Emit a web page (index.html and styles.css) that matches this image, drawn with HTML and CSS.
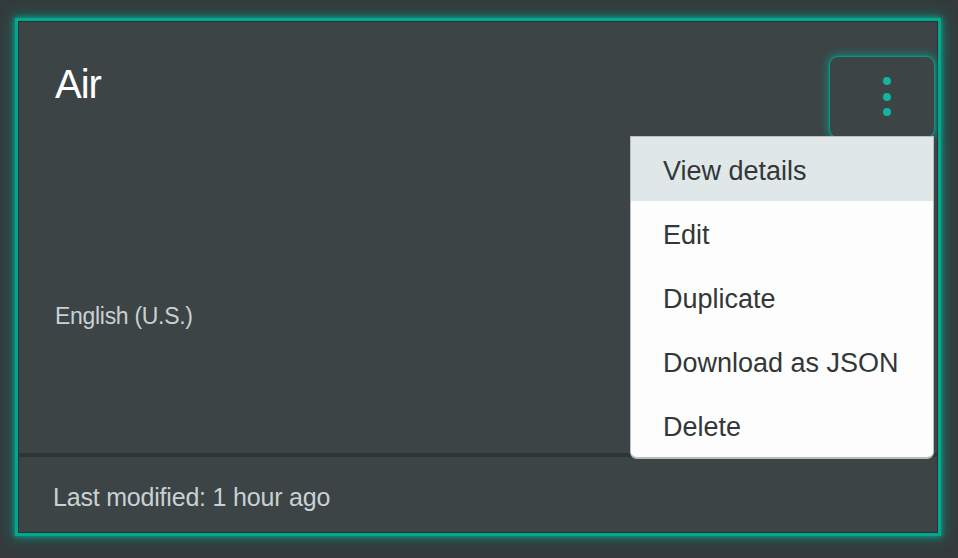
FILE: index.html
```html
<!DOCTYPE html>
<html lang="en">
<head>
    <meta charset="UTF-8">
    <meta name="viewport" content="width=device-width, initial-scale=1.0">
    <title>Air</title>
    <link rel="stylesheet" href="styles.css">
</head>
<body>
    <div class="card">
        <div class="card-main">
            <div class="card-header">
                <div class="card-title">Air</div>
                <div class="menu-wrap">
                    <button class="menu-button" aria-label="More actions">
                        <svg width="8" height="40" viewBox="0 0 8 40">
                            <circle cx="4" cy="4" r="4"/>
                            <circle cx="4" cy="20" r="4"/>
                            <circle cx="4" cy="35" r="4"/>
                        </svg>
                    </button>
                    <ul class="menu">
                        <li class="menu-item active">View details</li>
                        <li class="menu-item">Edit</li>
                        <li class="menu-item">Duplicate</li>
                        <li class="menu-item">Download as JSON</li>
                        <li class="menu-item">Delete</li>
                    </ul>
                </div>
            </div>
            <div class="card-language">English (U.S.)</div>
        </div>
        <div class="card-footer">Last modified: 1 hour ago</div>
    </div>
</body>
</html>
```

FILE: styles.css
```css
html {
    background: #343a3c;
}
body {
    font-family: "Liberation Sans", Arial, sans-serif;
    margin: 0;
    padding: 21px 20px 25px 18px;
    background: #343a3c;
}
.card {
    box-sizing: border-box;
    width: 920px;
    height: 512px;
    display: flex;
    flex-direction: column;
    background: #3c4446;
    border: 1px solid #2b3032;
    box-shadow: 0 0 0 3px #00a88e, 0 0 5px 4px rgba(0, 168, 142, 0.85), 0 0 14px 6px rgba(0, 168, 142, 0.4);
}
.card-main {
    flex: 1;
    padding: 35px 4px 0 36px;
}
.card-header {
    display: flex;
    justify-content: space-between;
    align-items: flex-start;
}
.card-title {
    margin-top: 4px;
    font-size: 40px;
    line-height: 46px;
    letter-spacing: -1px;
    color: #ffffff;
}
.menu-wrap {
    position: relative;
    margin-right: -1px;
}
.menu-button {
    display: flex;
    justify-content: center;
    align-items: center;
    width: 104px;
    height: 80px;
    padding: 0 0 0 10px;
    background: #3c4446;
    border: none;
    border-radius: 8px;
    box-shadow: 0 0 2px 1px rgba(0, 170, 145, 0.9), 0 0 8px 3px rgba(0, 170, 145, 0.55);
    cursor: pointer;
}
.menu-button svg {
    fill: #12b5a0;
}
.menu {
    position: absolute;
    top: 79px;
    right: 0;
    width: 302px;
    margin: 0;
    padding: 0;
    list-style: none;
    background: #fdfdfd;
    border: 1px solid #bcbcbc;
    border-bottom-width: 2px;
    border-radius: 0 0 7px 7px;
    overflow: hidden;
    z-index: 2;
}
.menu-item {
    height: 64px;
    padding-left: 32px;
    font-size: 27px;
    line-height: 68px;
    color: #333738;
}
.menu-item.active {
    background: #dfe7e8;
}
.card-language {
    margin-top: 165px;
    font-size: 23px;
    line-height: 28px;
    letter-spacing: -0.3px;
    color: #c9d1d3;
}
.card-footer {
    height: 79px;
    box-sizing: border-box;
    padding: 25px 0 0 34px;
    border-top: 4px solid #2f3435;
    font-size: 25px;
    line-height: 30px;
    letter-spacing: -0.2px;
    color: #c9d1d3;
}
```
